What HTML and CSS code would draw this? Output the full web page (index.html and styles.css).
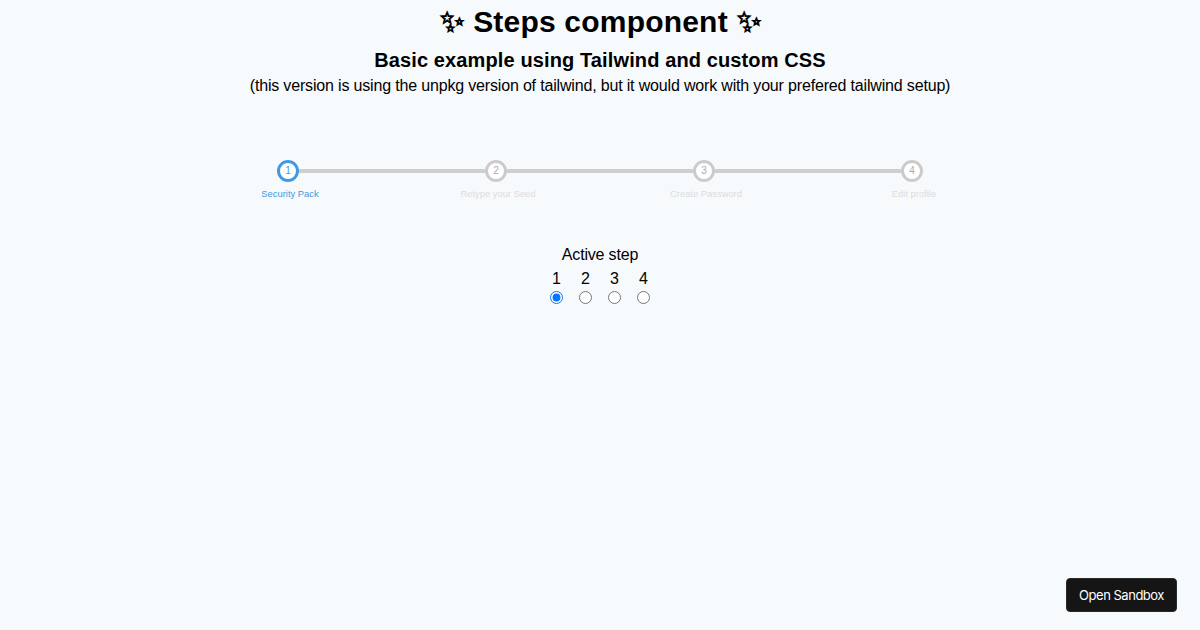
FILE: index.html
```html
<!DOCTYPE html>
<html lang="en">
  <head>
    <meta charset="UTF-8" />
    <meta name="viewport" content="width=device-width, initial-scale=1.0" />
    <title>Steps component</title>
    <link rel="stylesheet" href="styles.css">
  </head>
  <body>
    <div class="intro">
      <h1 class="title"><span class="sparkle first">&#x2728;&#xFE0E;</span> Steps component <span class="sparkle last">&#x2728;&#xFE0E;</span></h1>
      <h2 class="subtitle">Basic example using Tailwind and custom CSS</h2>
      <p class="note">(this version is using the unpkg version of tailwind, but it would work with your prefered tailwind setup)</p>
    </div>

    <div class="steps">
      <div class="step active">
        <div class="circle">1</div>
        <div class="label">Security Pack</div>
      </div>
      <div class="line"></div>
      <div class="step">
        <div class="circle">2</div>
        <div class="label">Retype your Seed</div>
      </div>
      <div class="line"></div>
      <div class="step">
        <div class="circle">3</div>
        <div class="label">Create Password</div>
      </div>
      <div class="line"></div>
      <div class="step">
        <div class="circle">4</div>
        <div class="label">Edit profile</div>
      </div>
    </div>

    <div class="picker">
      <p class="picker-title">Active step</p>
      <div class="options">
        <label class="option">1<input type="radio" name="step" checked /></label>
        <label class="option">2<input type="radio" name="step" /></label>
        <label class="option">3<input type="radio" name="step" /></label>
        <label class="option">4<input type="radio" name="step" /></label>
      </div>
    </div>

    <a class="sandbox" href="#">Open Sandbox</a>
  </body>
</html>
```

FILE: styles.css
```css
* {
  box-sizing: border-box;
}

body {
  margin: 0;
  min-height: 630px;
  background-color: #f7fafc;
  color: #000;
  font-family: "Liberation Sans", "DejaVu Sans", sans-serif;
  font-size: 16px;
  line-height: 24px;
  text-align: center;
}

.intro {
  padding-top: 4px;
}

.title {
  margin: 0;
  padding-left: 3px;
  font-size: 30px;
  line-height: 36px;
  font-weight: 700;
  letter-spacing: 0.2px;
}

.sparkle {
  font-family: "DejaVu Sans", sans-serif;
  font-weight: 700;
}

.sparkle.first {
  margin-right: -1px;
}

.sparkle.last {
  margin-left: 1px;
}

.subtitle {
  margin: 6px 0 0;
  font-size: 20px;
  line-height: 28px;
  font-weight: 700;
  letter-spacing: 0.12px;
}

.note {
  margin: 0;
  letter-spacing: -0.17px;
}

.steps {
  display: flex;
  align-items: flex-start;
  width: 646px;
  margin: 62px auto 0 277px;
}

.step {
  display: flex;
  flex-direction: column;
  align-items: center;
  flex: none;
  width: 22px;
}

.circle {
  width: 22px;
  height: 22px;
  border: 3px solid #cbcbcb;
  border-radius: 50%;
  background-color: #fff;
  color: #a0aec0;
  font-size: 10px;
  line-height: 16px;
}

.label {
  margin: 6px 0 0 4px;
  color: #dcdcdc;
  font-size: 9.4px;
  line-height: 12px;
  white-space: nowrap;
}

.step.active .circle {
  border-color: #4299e1;
  color: #4299e1;
}

.step.active .label {
  color: #4299e1;
}

.line {
  flex: 1;
  height: 4px;
  margin-top: 9px;
  background-color: #cfcfcf;
}

.picker {
  margin-top: 43px;
}

.picker-title {
  margin: 0;
  letter-spacing: -0.17px;
}

.options {
  display: flex;
  justify-content: center;
  gap: 16px;
}

.option {
  display: flex;
  flex-direction: column;
  align-items: center;
  width: 13px;
}

.option input {
  width: 13px;
  height: 13px;
  margin: 0;
}

.sandbox {
  position: fixed;
  right: 23px;
  bottom: 18px;
  padding: 8px 12px;
  border: 1px solid #2a2a2a;
  border-radius: 4px;
  background-color: #151515;
  color: #fff;
  font-family: Inter, sans-serif;
  font-size: 13px;
  line-height: 16px;
  letter-spacing: -0.48px;
  text-decoration: none;
}
```
